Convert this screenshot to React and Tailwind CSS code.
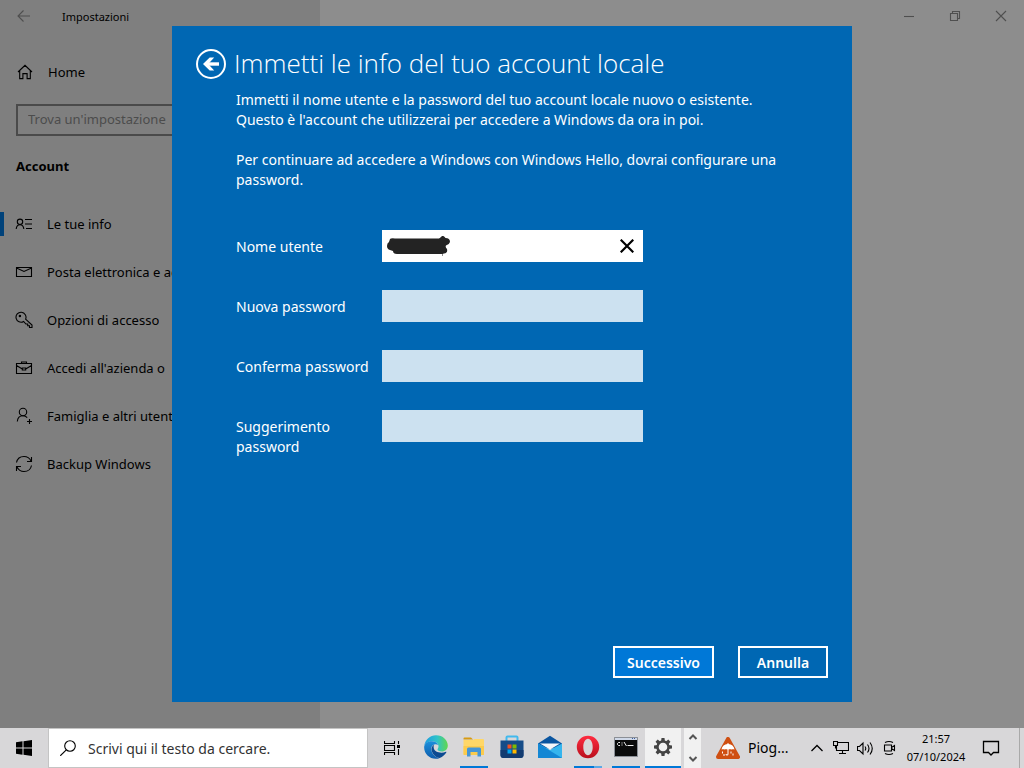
import { useState } from 'react';
import clsx from 'clsx';

/* ---------- line icons ---------- */

function Line({ size = 18, box = 18, className, children }) {
  return (
    <svg
      width={size}
      height={size}
      viewBox={`0 0 ${box} ${box}`}
      fill="none"
      stroke="currentColor"
      strokeWidth="1.1"
      className={clsx('shrink-0', className)}
      aria-hidden="true"
    >
      {children}
    </svg>
  );
}

const HomeIcon = () => (
  <Line>
    <path d="M2 9 9 2.300 16 9M3.700 7.600v8h3.200v-5h4.200v5h3.200v-8" />
  </Line>
);

const InfoIcon = () => (
  <Line>
    <circle cx="5" cy="6.800" r="2.700" />
    <path d="M1.200 14c.2-2.700 1.600-4.300 3.800-4.300S8.600 11.300 8.800 14M10 4.500h7M10 9h7M11 13.500h6" />
  </Line>
);

const MailIcon = () => (
  <Line>
    <path d="M1.500 4.500h15v9h-15zM1.500 5 9 8.500 16.500 5" />
  </Line>
);

const KeyIcon = () => (
  <Line>
    <path d="M10.600 8.200 17 14v2.500h-2.500v-1.700h-1.800v-1.800h-1.800L8.600 10.500A5 5 0 1 1 10.600 8.200Z" />
    <circle cx="4.900" cy="4.900" r=".7" />
  </Line>
);

const WorkIcon = () => (
  <Line>
    <path d="M1.500 4.500h15v10h-15zM6.500 4.500V3h5v1.500M1.500 6.500 7.300 10M16.500 6.500 10.700 10M7.300 9h3.400v2H7.300z" />
  </Line>
);

const FamilyIcon = () => (
  <Line>
    <circle cx="8" cy="5" r="3.700" />
    <path d="M2.300 14.500c.3-3.500 2.300-5.800 5.700-5.800 2 0 3.300.8 4.200 2M14.500 12v5M12 14.500h5" />
  </Line>
);

const SyncIcon = () => (
  <Line>
    <path d="M1.500 7.500C2.200 4 5.200 1.500 9 1.500c3.200 0 5.700 1.700 7 4.500M16.500 2v4.500H12M16.500 10.500c-.7 3.500-3.700 6-7.500 6-3.200 0-5.700-1.700-7-4.500M1.500 16v-4.500H6" />
  </Line>
);

const NAV = [
  { label: 'Le tue info',                 icon: InfoIcon, on: true },
  { label: 'Posta elettronica e account', icon: MailIcon },
  { label: 'Opzioni di accesso',          icon: KeyIcon },
  { label: "Accedi all'azienda o",        icon: WorkIcon },
  { label: 'Famiglia e altri utenti',     icon: FamilyIcon },
  { label: 'Backup Windows',              icon: SyncIcon },
];

/* ---------- settings window ---------- */

function Sidebar() {
  return (
    <aside className="w-80 shrink-0 bg-[#7f7f7f]">
      <div className="flex h-8 items-center gap-8 pl-4">
        <button aria-label="Indietro" className="text-[#4f4f4f]">
          <Line size={14} box={14}>
            <path d="M14 7H2M7.500 1.500 2 7l5.500 5.500" />
          </Line>
        </button>
        <span className="pt-0.5 text-[11px]">Impostazioni</span>
      </div>

      <a href="#home" className="mt-4 flex h-12 items-center gap-3.5 pl-4 text-[13px]">
        <HomeIcon />
        <span className="pt-0.5">Home</span>
      </a>

      <div className="mt-2 px-4">
        <input
          type="search"
          aria-label="Trova un'impostazione"
          placeholder="Trova un'impostazione"
          className="h-8 w-full border-2 border-[#4a4a4a] bg-transparent px-2.5 pb-0.5 text-[13px] placeholder:text-[#4c4c4c]"
        />
      </div>

      <h2 className="mt-5 px-4 text-[13px] leading-5 font-bold">Account</h2>

      <nav className="mt-6">
        {NAV.map(({ label, icon: Icon, on }) => (
          <a
            key={label}
            href="#account"
            aria-current={on ? 'page' : undefined}
            className="flex h-12 items-center text-[13px]"
          >
            <span className={clsx('h-6 w-1 shrink-0', on && 'bg-[#00427a]')} />
            <span className="flex min-w-0 items-center gap-3.5 pl-[11px]">
              <Icon />
              <span className="truncate pt-0.5">{label}</span>
            </span>
          </a>
        ))}
      </nav>
    </aside>
  );
}

function WindowControls() {
  return (
    <div className="flex h-8 justify-end text-[#4f4f4f]">
      <button aria-label="Riduci a icona" className="flex w-[46px] items-center justify-center">
        <Line size={12} box={12}><path d="M1 6.500h10" /></Line>
      </button>
      <button aria-label="Ripristina" className="flex w-[46px] items-center justify-center">
        <Line size={12} box={12}>
          <path d="M1.500 3.500h7v7h-7zM3.500 3.500v-2h7v7h-2" />
        </Line>
      </button>
      <button aria-label="Chiudi" className="flex w-[46px] items-center justify-center">
        <Line size={12} box={12}><path d="m1 1 10 10M11 1 1 11" /></Line>
      </button>
    </div>
  );
}

/* ---------- local account dialog ---------- */

const FIELDS = [
  { id: 'password', label: 'Nuova password',         type: 'password' },
  { id: 'confirm',  label: 'Conferma password',      type: 'password' },
  { id: 'hint',     label: 'Suggerimento password',  type: 'text' },
];

function FieldRow({ id, label, children }) {
  return (
    <div className="flex h-8 items-start">
      <label htmlFor={id} className="w-[146px] shrink-0 pt-[7px] pr-2 leading-5">
        {label}
      </label>
      {children}
    </div>
  );
}

function AccountDialog() {
  const [values, setValues] = useState({ user: '', password: '', confirm: '', hint: '' });
  const set = (id) => (e) => setValues((v) => ({ ...v, [id]: e.target.value }));

  return (
    <form
      role="dialog"
      aria-labelledby="dialog-title"
      onSubmit={(e) => e.preventDefault()}
      className="flex w-full max-w-[680px] flex-col bg-[#0067b3] px-6 pt-5 pb-6 text-sm text-white"
    >
      <header className="flex items-center gap-2">
        <button
          type="button"
          aria-label="Indietro"
          className="flex size-[30px] shrink-0 items-center justify-center rounded-full border-2 border-white"
        >
          <svg width="18" height="16" viewBox="0 0 18 16" fill="none" aria-hidden="true">
            <path d="M17 8H3.500" stroke="#fff" strokeWidth="3.400" />
            <path d="M7.700 1.500h4.500L6.200 8l6 6.500H7.700L1 8z" fill="#fff" />
          </svg>
        </button>
        <h1
          id="dialog-title"
          className="pb-0.5 font-['Open_Sans',sans-serif] text-[26px] leading-[34px] font-light"
        >
          Immetti le info del tuo account locale
        </h1>
      </header>

      <div className="mt-2 flex flex-1 flex-col px-10">
        <p className="leading-5">
          Immetti il nome utente e la password del tuo account locale nuovo o esistente.
          <br />
          Questo è l'account che utilizzerai per accedere a Windows da ora in poi.
        </p>
        <p className="mt-5 leading-5">
          Per continuare ad accedere a Windows con Windows Hello, dovrai configurare una password.
        </p>

        <div className="mt-10 flex flex-col gap-7">
          <FieldRow id="user" label="Nome utente">
            <div className="relative flex w-[261px] bg-white text-black">
              <input
                id="user"
                type="text"
                value={values.user}
                onChange={set('user')}
                className="h-8 min-w-0 flex-1 px-2 outline-none"
              />
              <svg
                width="64"
                height="22"
                viewBox="0 0 64 22"
                className="pointer-events-none absolute top-1.5 left-[5px]"
                aria-hidden="true"
              >
                <path
                  d="M3 3Q4 2 8 2.500H52Q54 1 55 0Q57-.5 58.500 2Q63 2 63 6Q62 9 59 9.500Q58 11 60 13Q61 17 57 17.500L55.500 18V20H55V18H10Q6 18 6 15L3 14Q0 13 0 10Q0 7 2 6Z"
                  fill="#232323"
                />
              </svg>
              <button
                type="button"
                aria-label="Cancella testo"
                onClick={() => setValues((v) => ({ ...v, user: '' }))}
                className="flex w-8 items-center justify-center"
              >
                <svg width="14" height="14" viewBox="0 0 14 14" stroke="#000" strokeWidth="2.200" aria-hidden="true">
                  <path d="m.7.700 12.600 12.600M13.300.700.700 13.300" />
                </svg>
              </button>
            </div>
          </FieldRow>

          {FIELDS.map(({ id, label, type }) => (
            <FieldRow key={id} id={id} label={label}>
              <input
                id={id}
                type={type}
                value={values[id]}
                onChange={set(id)}
                className="h-8 w-[261px] bg-[#cce1f0] px-2 text-black outline-none"
              />
            </FieldRow>
          ))}
        </div>
      </div>

      <footer className="flex justify-end gap-6">
        <button type="submit" className="h-8 w-[101px] border-2 border-white bg-[#0078d7] pt-0.5 font-semibold">
          Successivo
        </button>
        <button type="button" className="h-8 w-[90px] border-2 border-white pt-0.5 font-semibold">
          Annulla
        </button>
      </footer>
    </form>
  );
}

/* ---------- taskbar ---------- */

const EdgeLogo = () => (
  <svg width="24" height="24" viewBox="0 0 24 24" aria-hidden="true">
    <defs>
      <linearGradient id="edge-top" x1="0" y1=".4" x2="1" y2=".4">
        <stop offset="0" stopColor="#1f9be0" />
        <stop offset=".55" stopColor="#2fc3c9" />
        <stop offset="1" stopColor="#62d74c" />
      </linearGradient>
      <linearGradient id="edge-low" x1="0" y1="0" x2="0" y2="1">
        <stop offset="0" stopColor="#1b8fdc" />
        <stop offset="1" stopColor="#0f5cab" />
      </linearGradient>
    </defs>
    <path d="M.3 10.500C1.200 4.500 6 .2 12 .2c7 0 11.800 5 11.800 10.300 0 3.700-2.700 6-6 6-2.800 0-4.300-1.100-4.300-2 0-.7 1-1.200 1-3.200 0-2.800-2.800-5-6.500-5C4.600 6.300 1.700 8 .3 10.500z" fill="url(#edge-top)" />
    <path d="M.2 11.500C1 8 4.300 6.300 7.800 6.300c3.200 0 5.500 1.700 6.400 3.700-1-.6-2-.9-3-.8-3 .2-4.400 3-3.700 6.200.8 3.800 4 7 8.200 7.500-1.200.6-2.500.9-3.900.9C5 23.800-.4 18.200.2 11.500z" fill="url(#edge-low)" />
    <path d="M10 9.700c-2 1.200-2.900 3.500-2.300 6 .8 3.700 4 6.700 8 7.200 3-1.100 5.400-3.300 6.700-5.700.2-.4-.1-.7-.5-.5-5 2.300-11.500.3-12.200-3.700-.2-1.200 0-2.300.3-3.300z" fill="#0c4a91" />
  </svg>
);

const FolderLogo = () => (
  <svg width="22" height="20" viewBox="0 0 22 20" aria-hidden="true">
    <path d="M.5 1.500q0-1 1-1H8l2 2H.5z" fill="#d89b12" />
    <path d="M.5 3H10l1.500-1H20q1 0 1 1v14H.5z" fill="#ffd767" />
    <path d="M.5 9H21v9H.5z" fill="#fccb4c" />
    <path d="M4 19.500V12q0-1.500 1.500-1.500h11Q18 10.500 18 12v7.500h-3.500V15h-7v4.500z" fill="#4596d6" />
  </svg>
);

const StoreLogo = () => (
  <svg width="24" height="24" viewBox="0 0 24 24" aria-hidden="true">
    <path d="M6.500 7V2.500q0-1 1-1h9q1 0 1 1V7" fill="none" stroke="#41b9ee" strokeWidth="2" />
    <path d="M.5 5.500h23V20q0 3-3 3h-17q-3 0-3-3z" fill="#164c88" />
    <path d="M.5 15h23v5q0 3-3 3h-17q-3 0-3-3z" fill="#123b70" />
    <path d="M7.500 9.500h4v4h-4z" fill="#f25022" />
    <path d="M12.500 9.500h4v4h-4z" fill="#7fba00" />
    <path d="M7.500 14.500h4v4h-4z" fill="#00a4ef" />
    <path d="M12.500 14.500h4v4h-4z" fill="#ffb900" />
  </svg>
);

const MailLogo = () => (
  <svg width="26" height="24" viewBox="0 0 26 24" aria-hidden="true">
    <path d="M1 8.500 13 .8l12 7.700v5H1z" fill="#0b55a0" />
    <path d="M1 8.500 13 15l12-6.500V23H1z" fill="#35b5ee" />
    <path d="M1 8.500 25 23H1z" fill="#1487d4" />
    <path d="M3 8.500h20L13 14.500z" fill="#f5f7fa" />
  </svg>
);

const OperaLogo = () => (
  <svg width="24" height="24" viewBox="0 0 24 24" aria-hidden="true">
    <defs>
      <linearGradient id="opera" x1="0" y1="0" x2="0" y2="1">
        <stop offset="0" stopColor="#ff2b40" />
        <stop offset="1" stopColor="#b9101d" />
      </linearGradient>
    </defs>
    <path fillRule="evenodd" d="M12 .8a11.200 11.200 0 1 0 0 22.400 11.200 11.200 0 0 0 0-22.400zM12 3.800c2.800 0 4.700 3.700 4.700 8.200s-1.900 8.200-4.700 8.200S7.300 16.500 7.300 12 9.200 3.800 12 3.800z" fill="url(#opera)" />
  </svg>
);

const ConsoleLogo = () => (
  <svg width="24" height="20" viewBox="0 0 24 20" aria-hidden="true">
    <path d="M.5.500h23v19H.5z" fill="#0b0b0b" stroke="#8b8f96" />
    <path d="M1 1h22v2H1z" fill="#cfd8e8" />
    <path d="M18 1.500h1M20 1.500h1" stroke="#3f5f9f" />
    <path d="M6 5.500H4.500L3.500 6.500v1l1 1H6M8 5.500v1M8 7.500v1M10 5l2.500 4M13.500 8.500h6" fill="none" stroke="#eee" />
  </svg>
);

const TEETH = [0, 45, 90, 135, 180, 225, 270, 315];

const GearIcon = () => (
  <svg width="20" height="20" viewBox="0 0 20 20" aria-hidden="true">
    <circle cx="10" cy="10" r="5.500" fill="none" stroke="#444" strokeWidth="2.400" />
    {TEETH.map((a) => (
      <path key={a} d="M8.500 1h3l.4 3.500H8.100z" fill="#444" transform={`rotate(${a} 10 10)`} />
    ))}
  </svg>
);

const RainIcon = () => (
  <svg width="24" height="22" viewBox="0 0 24 22" className="shrink-0" aria-hidden="true">
    <path d="M12 2 22 20H2z" fill="#cf4f12" stroke="#cf4f12" strokeWidth="4" strokeLinejoin="round" />
    <path d="M5.500 12.500C6 9 8.500 7.300 11.500 7V6h1v1c3 .3 5.500 2 6 5.500-1-.4-2-.4-3 0-1-.4-2-.4-3 0V17q0 1.500-1.500 1.500T9.500 17h1q0 .6.500.6t.5-.6v-4.500c-1-.4-2-.4-3 0-1-.4-2-.4-3 0z" fill="#fff" />
    <path d="M6.500 14.500v2M8 17v2M15 14.500v2M17 16.500v2" stroke="#fff" />
  </svg>
);

const APPS = [
  { label: 'Microsoft Edge',      logo: EdgeLogo },
  { label: 'Esplora file',        logo: FolderLogo,  running: true },
  { label: 'Microsoft Store',     logo: StoreLogo },
  { label: 'Posta',               logo: MailLogo },
  { label: 'Opera',               logo: OperaLogo,   running: true, grouped: true },
  { label: 'Prompt dei comandi',  logo: ConsoleLogo, running: true },
];

function Taskbar() {
  return (
    <footer className="flex h-10 shrink-0 bg-[#d8d7d9] text-black">
      <button aria-label="Start" className="flex w-12 shrink-0 items-center justify-center">
        <svg width="16" height="16" viewBox="0 0 16 16" aria-hidden="true">
          <path d="M0 2.300 6.500 1.300V7.500H0zM7.500 1.200 16 0v7.500H7.500zM0 8.500h6.500v6.200L0 13.700zM7.500 8.500H16V16l-8.500-1.200z" />
        </svg>
      </button>

      <label className="flex w-80 items-center gap-3 border border-[#c4c4c4] bg-white pl-[11px]">
        <Line size={16} box={16}>
          <circle cx="10" cy="6" r="5.300" />
          <path d="m6.300 9.800-6 6" />
        </Line>
        <input
          type="text"
          aria-label="Cerca"
          placeholder="Scrivi qui il testo da cercare."
          className="min-w-0 flex-1 pt-0.5 text-sm outline-none placeholder:text-[#333]"
        />
      </label>

      <button aria-label="Visualizzazione attività" className="mr-px flex w-12 shrink-0 items-center justify-center">
        <Line size={16} box={16}>
          <path d="M.5 1v2.500h10V1M.5 5.500h10v5H.5zM.5 15v-2.500h10V15M14.500 1v3M14.500 9v6" />
          <path d="M13 5h3v3h-3z" fill="currentColor" stroke="none" />
        </Line>
      </button>

      {APPS.map(({ label, logo: Logo, running, grouped }) => (
        <button key={label} aria-label={label} className="flex w-[38px] shrink-0 flex-col items-center">
          <span className="flex flex-1 items-center">
            <Logo />
          </span>
          <span className="flex h-0.5 w-7">
            {running && <span className="flex-1 bg-[#0078d7]" />}
            {grouped && <span className="w-2 bg-[#5ba9e6]" />}
          </span>
        </button>
      ))}
      <button aria-label="Impostazioni" className="flex w-9 shrink-0 flex-col items-center bg-[#f1f1f1]">
        <span className="flex flex-1 items-center">
          <GearIcon />
        </span>
        <span className="h-0.5 w-full bg-[#0078d7]" />
      </button>

      <div className="ml-[3px] flex w-[17px] shrink-0 flex-col items-center justify-between bg-[#f1f1f1] py-1 text-[#555]">
        <button aria-label="Scorri su">
          <Line size={10} box={10}><path d="m1.500 7 3.500-3.500L8.500 7" strokeWidth="2" /></Line>
        </button>
        <button aria-label="Scorri giù">
          <Line size={10} box={10}><path d="M1.500 3 5 6.500 8.500 3" strokeWidth="2" /></Line>
        </button>
      </div>

      <button className="ml-[15px] flex items-center gap-2 text-sm whitespace-nowrap">
        <RainIcon />
        Piog...
      </button>

      <div className="ml-auto flex shrink-0">
        <button aria-label="Mostra icone nascoste" className="flex w-6 items-center justify-center">
          <Line size={14} box={14}><path d="m1.500 10 5.500-5.500L12.500 10" strokeWidth="1.300" /></Line>
        </button>
        <button aria-label="Rete" className="flex w-6 items-center justify-center">
          <Line size={16} box={16}>
            <path d="M5 2.500h10.500v8H3.500V6M6 13.500h7M9.500 10.500v3M.5 1.500h4v4h-4zM2.500 5.500v3" />
          </Line>
        </button>
        <button aria-label="Volume" className="flex w-6 items-center justify-center">
          <Line size={17} box={17}>
            <path d="M.5 6.500h2L6 3v11l-3.500-3.500h-2zM8 6.500q1.500 2 0 4M10.500 4.500q3 4 0 8M13 2.500q4.500 6 0 12" />
          </Line>
        </button>
        <button aria-label="Videocamera" className="flex w-6 items-center justify-center">
          <Line size={16} box={16}>
            <path d="M3.500 5h7v6h-7zM10.500 7.500l3-2v5l-3-2M4 2.500q4-2 8 0M4 13.500q4 2 8 0" />
          </Line>
        </button>
        <time dateTime="2024-10-07T21:57" className="w-[70px] pt-0.5 text-center text-[11px] leading-[18px]">
          21:57
          <br />
          07/10/2024
        </time>
        <button aria-label="Notifiche" className="mr-2 flex w-10 items-center justify-center">
          <Line size={18} box={18}>
            <path d="M1.500 2.500h15v11h-5L9 16l-2.500-2.500h-5z" strokeWidth="1.300" />
          </Line>
        </button>
        <button aria-label="Mostra desktop" className="w-[5px] border-l border-[#a9a9a9]" />
      </div>
    </footer>
  );
}

export default function App() {
  return (
    <div className="flex min-h-screen flex-col font-['Noto_Sans','Open_Sans',sans-serif] text-black">
      <main className="relative flex flex-1 overflow-hidden bg-[#8d8d8d]">
        <Sidebar />
        <div className="flex-1">
          <WindowControls />
        </div>
        <div className="absolute inset-0 flex justify-center py-[26px]">
          <AccountDialog />
        </div>
      </main>
      <Taskbar />
    </div>
  );
}
